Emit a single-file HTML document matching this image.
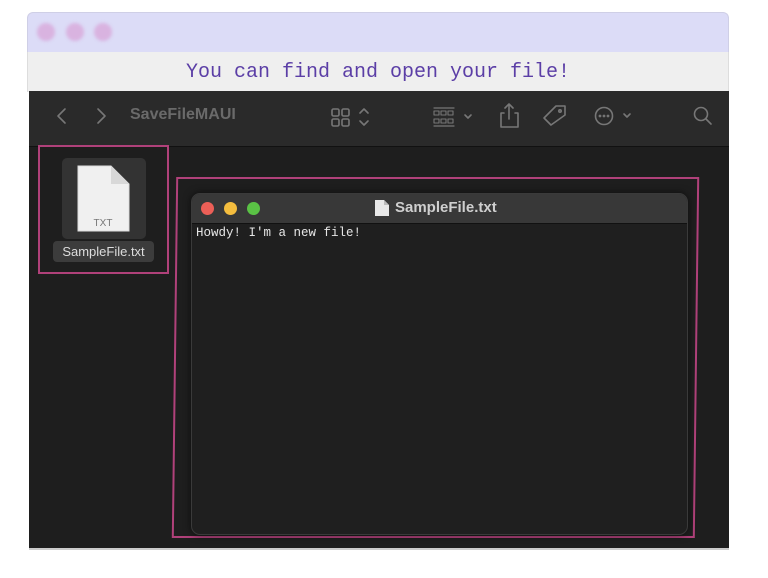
<!DOCTYPE html>
<html><head><style>
*{margin:0;padding:0;box-sizing:border-box}
body{width:768px;height:578px;background:#fff;position:relative;overflow:hidden;font-family:"Liberation Sans",sans-serif}
.abs{position:absolute}
</style></head><body>
<div class="abs" style="left:27px;top:12px;width:702px;height:40px;background:#dcdcf7;border-radius:6px 6px 0 0;border:1px solid #cfcfe6;border-bottom:none"></div>
<div class="abs" style="left:37px;top:23px;width:18px;height:18px;border-radius:50%;background:#d9b3e0;filter:blur(1.5px)"></div>
<div class="abs" style="left:66px;top:23px;width:18px;height:18px;border-radius:50%;background:#d9b3e0;filter:blur(1.5px)"></div>
<div class="abs" style="left:94px;top:23px;width:18px;height:18px;border-radius:50%;background:#d9b3e0;filter:blur(1.5px)"></div>
<div class="abs" style="left:27px;top:52px;width:702px;height:40px;background:#efefef;border-left:1px solid #ddd;border-right:1px solid #ddd"></div>
<div class="abs" style="left:27px;top:61px;width:702px;text-align:center;font-family:'Liberation Mono',monospace;font-size:20px;color:#5b3ea6">You can find and open your file!</div>
<div class="abs" style="left:29px;top:91px;width:700px;height:459px;background:#1e1e1e;border-bottom:2px solid #ccc"></div>
<div class="abs" style="left:29px;top:91px;width:700px;height:56px;background:#2a2a2a;border-bottom:1px solid #111"></div>
<svg class="abs" style="left:29px;top:91px" width="700" height="56" fill="none" stroke="#777" stroke-width="1.6" stroke-linecap="round" stroke-linejoin="round">
<path d="M36 18l-7 7 7 7M69 18l7 7-7 7"/>
<rect x="303" y="18" width="7" height="7" rx="1.5"/><rect x="313" y="18" width="7" height="7" rx="1.5"/><rect x="303" y="28" width="7" height="7" rx="1.5"/><rect x="313" y="28" width="7" height="7" rx="1.5"/>
<path d="M331 22l4-4 4 4M331 30l4 4 4-4"/>
<path d="M405 17h20M405 35h20" stroke-width="1.2"/>
<g stroke-width="1.1"><rect x="405" y="20" width="5" height="4"/><rect x="412" y="20" width="5" height="4"/><rect x="419" y="20" width="5" height="4"/><rect x="405" y="28" width="5" height="4"/><rect x="412" y="28" width="5" height="4"/><rect x="419" y="28" width="5" height="4"/></g>
<path d="M436 24l3 3 3-3"/>
<path d="M475 22h-3v14h17v-14h-3M480 13v15M476 17l4-4 4 4"/>
<path d="M522 34l-7-7 12-12h9v9z"/><circle cx="531" cy="20" r="1.2"/>
<circle cx="575" cy="25" r="8.5"/><circle cx="571" cy="25" r=".6"/><circle cx="575" cy="25" r=".6"/><circle cx="579" cy="25" r=".6"/>
<path d="M595 23l3 3 3-3"/>
<circle cx="672" cy="23" r="6.5"/><path d="M677 28l5 5"/>
</svg>
<div class="abs" style="left:130px;top:106px;font-size:16px;font-weight:bold;color:#6a6a6a">SaveFileMAUI</div>

<div class="abs" style="left:38px;top:145px;width:131px;height:129px;border:2px solid #b0417a"></div>
<div class="abs" style="left:62px;top:158px;width:84px;height:81px;background:#333;border-radius:5px"></div>
<svg class="abs" style="left:76px;top:164px" width="56" height="70"><path d="M2 2h33l18 18v47H2z" fill="#f0f0f0" stroke="#ddd"/><path d="M35 2v18h18" fill="#d8d8d8"/><text x="27" y="62" font-size="10" text-anchor="middle" fill="#777" font-family="Liberation Sans">TXT</text></svg>
<div class="abs" style="left:53px;top:241px;width:101px;height:21px;background:#3c3c3c;border-radius:4px;color:#ddd;font-size:13px;text-align:center;line-height:21px">SampleFile.txt</div>

<div class="abs" style="left:174px;top:177px;width:523px;height:361px;border:2px solid #b0417a;transform:skewX(-0.7deg)"></div>
<div class="abs" style="left:191px;top:193px;width:497px;height:342px;background:#1f1f1f;border:1px solid #3a3a3a;border-radius:9px;overflow:hidden;box-shadow:0 0 8px rgba(0,0,0,.6)">
<div style="height:30px;background:#383838;border-bottom:1px solid #111"></div>
</div>
<div class="abs" style="left:201px;top:202px;width:13px;height:13px;border-radius:50%;background:#ec5f57"></div>
<div class="abs" style="left:224px;top:202px;width:13px;height:13px;border-radius:50%;background:#f4bd3e"></div>
<div class="abs" style="left:247px;top:202px;width:13px;height:13px;border-radius:50%;background:#5ac245"></div>
<svg class="abs" style="left:374px;top:199px" width="16" height="18"><path d="M1 1h9l5 5v11H1z" fill="#e8e8e8"/><path d="M10 1v5h5" fill="#bbb"/></svg>
<div class="abs" style="left:395px;top:199px;font-size:15px;font-weight:bold;color:#cfcfcf">SampleFile.txt</div>
<div class="abs" style="left:196px;top:226px;font-family:'Liberation Mono',monospace;font-size:12.5px;color:#e6e6e6">Howdy! I'm a new file!</div>
</body></html>
